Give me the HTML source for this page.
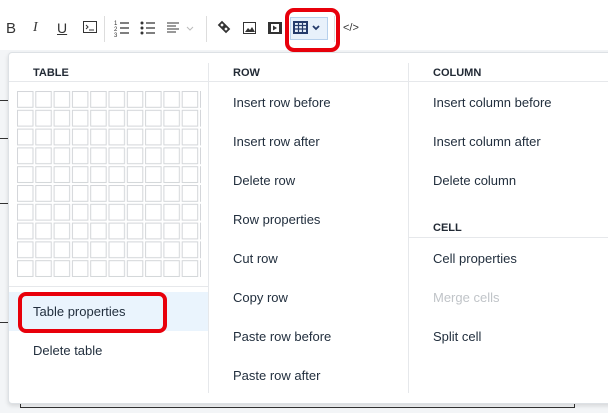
<!DOCTYPE html>
<html><head><style>
body{margin:0;width:608px;height:413px;background:#f3f5f7;position:relative;overflow:hidden;font-family:"Liberation Sans",sans-serif;}
.top{position:absolute;left:0;top:0;width:608px;height:50px;background:#fff;}
.ic{position:absolute;top:20px;color:#333;font-size:14px;}
.panel{position:absolute;left:8px;top:52px;width:610px;height:350px;background:#fff;border:1px solid #dde1e5;border-radius:4px;box-shadow:0 2px 4px rgba(0,0,0,.12);}
.vd{position:absolute;top:10px;bottom:10px;width:1px;background:#e6e8eb;}
.h{position:absolute;top:14px;font-size:11px;font-weight:bold;color:#222a35;}
.it{position:absolute;font-size:13px;color:#222f3e;}
svg.t{position:absolute;top:19px}
</style></head><body>
<div class="top"></div>
<span class="ic" style="left:6px;font-size:15px">B</span>
<span class="ic" style="left:33px;font-style:italic;font-family:'Liberation Serif'">I</span>
<span class="ic" style="left:57px;text-decoration:underline">U</span>
<svg class="t" style="left:82px" width="16" height="16"><rect x="1.5" y="2.5" width="13" height="11" fill="none" stroke="#333"/><path d="M4 6l2 2-2 2M7 11h5" stroke="#333" fill="none"/></svg>
<div style="position:absolute;left:104px;top:16px;width:1px;height:26px;background:#ddd"></div>
<svg class="t" style="left:114px" width="16" height="18"><text x="0" y="6" font-size="6" fill="#333">1</text><text x="0" y="12" font-size="6" fill="#333">2</text><text x="0" y="18" font-size="6" fill="#333">3</text><path d="M6 4h9M6 9h9M6 14h9" stroke="#333" stroke-width="1.3"/></svg>
<svg class="t" style="left:140px" width="16" height="18"><circle cx="2" cy="4" r="1.5" fill="#333"/><circle cx="2" cy="9" r="1.5" fill="#333"/><circle cx="2" cy="14" r="1.5" fill="#333"/><path d="M6 4h9M6 9h9M6 14h9" stroke="#333" stroke-width="1.3"/></svg>
<svg class="t" style="left:166px" width="30" height="18"><path d="M1 4h12M1 7h9M1 10h12M1 13h9" stroke="#333"/><path d="M21 8l3 3 3-3" stroke="#bbb" fill="none"/></svg>
<div style="position:absolute;left:206px;top:16px;width:1px;height:26px;background:#ddd"></div>
<svg class="t" style="left:216px" width="16" height="18"><path d="M3 6l3-3 3 3-3 3zM7 10l3-3 3 3-3 3z" fill="none" stroke="#333" stroke-width="1.8"/></svg>
<svg class="t" style="left:242px" width="16" height="18"><rect x="1.5" y="3.5" width="12" height="11" fill="none" stroke="#333"/><path d="M3 13l3-4 2 2 2-3 3 5z" fill="#333"/></svg>
<svg class="t" style="left:267px" width="16" height="18"><rect x="1" y="3" width="14" height="12" fill="#333"/><rect x="4" y="5" width="8" height="8" fill="#fff"/><path d="M6 6.5l4 2.5-4 2.5z" fill="#333"/></svg>
<div style="position:absolute;left:290px;top:17px;width:38px;height:23px;background:#e8f1fb;border:1px solid #b6d0ec;box-sizing:border-box"></div>
<svg class="t" style="left:293px;top:21px" width="34" height="14"><rect x="1" y="1" width="13" height="11" fill="none" stroke="#243a6a" stroke-width="2"/><path d="M1 4.5h13M1 8h13M5.5 1v11M9.5 1v11" stroke="#243a6a" stroke-width="1.2"/><path d="M20 5l3 3 3-3" stroke="#243a6a" stroke-width="1.8" fill="none"/></svg>
<div style="position:absolute;left:285px;top:8px;width:55px;height:44px;border:4px solid #e8000b;border-radius:9px;box-sizing:border-box"></div>
<div style="position:absolute;left:334px;top:16px;width:1px;height:26px;background:#ddd"></div>
<span class="ic" style="left:343px;font-size:11px;top:22px">&lt;/&gt;</span>
<div style="position:absolute;left:0;top:100px;width:8px;height:1px;background:#333"></div>
<div style="position:absolute;left:0;top:138px;width:8px;height:1px;background:#333"></div>
<div style="position:absolute;left:0;top:203px;width:8px;height:1px;background:#333"></div>
<div style="position:absolute;left:0;top:322px;width:8px;height:1px;background:#333"></div>
<div style="position:absolute;left:20px;top:400px;width:1px;height:8px;background:#333"></div>
<div style="position:absolute;left:574px;top:400px;width:1px;height:8px;background:#333"></div>
<div style="position:absolute;left:20px;top:407px;width:555px;height:1px;background:#333"></div>
<div class="panel">
<div style="position:absolute;left:0;right:0;top:28px;height:1px;background:#e6e8eb"></div>
<div class="vd" style="left:199px"></div>
<div class="vd" style="left:399px"></div>
<div style="position:absolute;left:399px;right:0;top:184px;height:1px;background:#e6e8eb"></div>
<div style="position:absolute;left:0;width:199px;top:233px;height:1px;background:#e6e8eb"></div>
<div class="h" style="left:24px">TABLE</div>
<div class="h" style="left:224px">ROW</div>
<div class="h" style="left:424px">COLUMN</div>
<div class="h" style="left:424px;top:169px">CELL</div>
<div style="position:absolute;left:0;width:199px;top:239px;height:39px;background:#eaf4fd"></div>
<div style="position:absolute;left:9px;top:239px;width:149px;height:41px;border:4px solid #e8000b;border-radius:8px;box-sizing:border-box"></div>
<div class="it" style="left:24px;top:251px">Table properties</div>
<div class="it" style="left:24px;top:290px">Delete table</div>
<div class="it" style="left:224px;top:42px">Insert row before</div>
<div class="it" style="left:224px;top:81px">Insert row after</div>
<div class="it" style="left:224px;top:120px">Delete row</div>
<div class="it" style="left:224px;top:159px">Row properties</div>
<div class="it" style="left:224px;top:198px">Cut row</div>
<div class="it" style="left:224px;top:237px">Copy row</div>
<div class="it" style="left:224px;top:276px">Paste row before</div>
<div class="it" style="left:224px;top:315px">Paste row after</div>
<div class="it" style="left:424px;top:42px">Insert column before</div>
<div class="it" style="left:424px;top:81px">Insert column after</div>
<div class="it" style="left:424px;top:120px">Delete column</div>
<div class="it" style="left:424px;top:198px">Cell properties</div>
<div class="it" style="left:424px;top:237px;color:#c0c4c8">Merge cells</div>
<div class="it" style="left:424px;top:276px">Split cell</div>
</div>
<svg style="position:absolute;left:17px;top:91px" width="184" height="186">
<defs><pattern id="p" width="18.3" height="18.8" patternUnits="userSpaceOnUse"><rect x="0.5" y="0.5" width="15.5" height="15.8" fill="#fff" stroke="#d3d6d9"/></pattern></defs>
<rect width="184" height="186" fill="url(#p)"/>
</svg>
</body></html>
